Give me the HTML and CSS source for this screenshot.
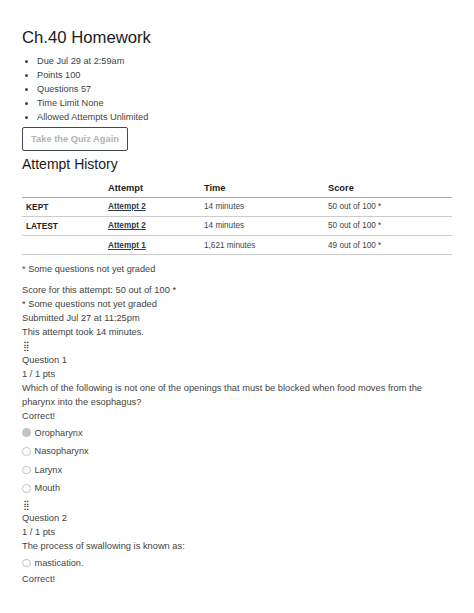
FILE: index.html
```html
<html>
    <head>
        <link rel="stylesheet" href="styles.css">
    </head>
    <body>
        <h1>Ch.40 Homework</h1>
        <ul class="details">
            <li>Due Jul 29 at 2:59am</li>
            <li>Points 100</li>
            <li>Questions 57</li>
            <li>Time Limit None</li>
            <li>Allowed Attempts Unlimited</li>
        </ul>
        <button class="btn">Take the Quiz Again</button>
        <h2>Attempt History</h2>
        <table class="history">
            <tr><th></th><th>Attempt</th><th>Time</th><th>Score</th></tr>
            <tr><td class="tag">KEPT</td><td><a href="#">Attempt 2</a></td><td>14 minutes</td><td>50 out of 100 *</td></tr>
            <tr><td class="tag">LATEST</td><td><a href="#">Attempt 2</a></td><td>14 minutes</td><td>50 out of 100 *</td></tr>
            <tr><td class="tag"></td><td><a href="#">Attempt 1</a></td><td>1,621 minutes</td><td>49 out of 100 *</td></tr>
        </table>
        <p class="note">* Some questions not yet graded</p>
        <div class="lines">
            <div>Score for this attempt: 50 out of 100 *</div>
            <div>* Some questions not yet graded</div>
            <div>Submitted Jul 27 at 11:25pm</div>
            <div>This attempt took 14 minutes.</div>
            <div class="grip">⣿</div>
            <div>Question 1</div>
            <div>1 / 1 pts</div>
            <div>Which of the following is not one of the openings that must be blocked when food moves from the pharynx into the esophagus?</div>
            <div>Correct!</div>
        </div>
        <div class="answers">
            <div class="answer"><span class="radio checked"></span>Oropharynx</div>
            <div class="answer"><span class="radio"></span>Nasopharynx</div>
            <div class="answer"><span class="radio"></span>Larynx</div>
            <div class="answer"><span class="radio"></span>Mouth</div>
        </div>
        <div class="lines">
            <div class="grip short">⣿</div>
            <div>Question 2</div>
            <div>1 / 1 pts</div>
            <div>The process of swallowing is known as:</div>
        </div>
        <div class="answers single">
            <div class="answer"><span class="radio"></span>mastication.</div>
        </div>
        <div class="lines last">
            <div>Correct!</div>
        </div>
    </body>
</html>
```
FILE: styles.css
```css
body {
    margin: 0;
    padding: 27px 22px 0;
    background-color: #fff;
    color: #444;
    font-family: "Liberation Sans", Arial, sans-serif;
    font-size: 9.2px;
    line-height: 14px;
}
h1 {
    margin: 0;
    color: #1a1a1a;
    font-size: 16.7px;
    font-weight: normal;
    line-height: 21px;
}
h2 {
    margin: 4px 0 0;
    color: #1a1a1a;
    font-size: 14px;
    font-weight: normal;
    line-height: 19px;
}
.details {
    margin: 6px 0 0;
    padding-left: 15px;
}
.btn {
    display: block;
    width: 106px;
    height: 24px;
    margin: 3px 0 0;
    padding: 0;
    border: 1.5px solid #3f4a52;
    border-radius: 2px;
    background-color: #fff;
    color: #b4b4b4;
    font-family: inherit;
    font-size: 9.3px;
    font-weight: bold;
}
.history {
    width: 430px;
    margin-top: 5px;
    border-collapse: collapse;
    table-layout: fixed;
}
.history th {
    height: 18px;
    padding: 0;
    border-bottom: 1px solid #aaa;
    color: #222;
    text-align: left;
    font-size: 9.3px;
}
.history th:nth-child(1) {
    width: 86px;
}
.history th:nth-child(2) {
    width: 96px;
}
.history th:nth-child(3) {
    width: 124px;
}
.history td {
    height: 19.3px;
    padding: 0;
    border-bottom: 1px solid #ccc;
    font-size: 8.2px;
}
.history .tag {
    padding-left: 4px;
    color: #222;
    font-weight: bold;
    font-size: 8.4px;
}
.history a {
    color: #2d3b45;
    font-weight: bold;
}
.note {
    margin: 7px 0 0;
}
.lines {
    font-size: 9.3px;
}
.note + .lines {
    margin-top: 7px;
}
.grip {
    height: 14px;
    overflow: hidden;
    padding-left: 1px;
    color: #333;
}
.grip.short {
    height: 13px;
}
.answers.single {
    margin-top: 2px;
}
.answers.single .answer {
    height: 16px;
}
.lines.last {
    margin-top: 1px;
}
.answer {
    display: flex;
    align-items: center;
    height: 18.6px;
}
.radio {
    width: 6.5px;
    height: 6.5px;
    margin-right: 4px;
    border: 1px solid #c4c4c4;
    border-radius: 50%;
}
.radio.checked {
    background-color: #c4c4c4;
}
```
